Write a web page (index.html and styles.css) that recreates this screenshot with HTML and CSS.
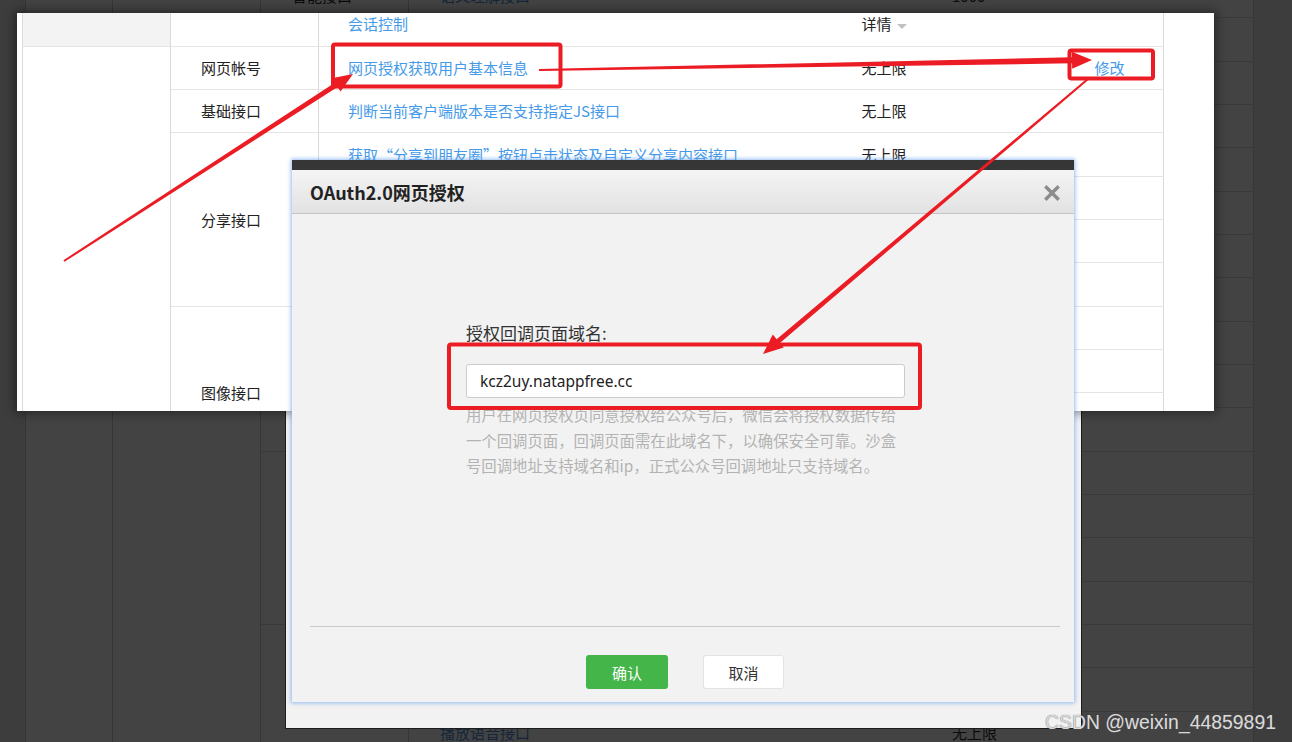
FILE: index.html
```html
<!DOCTYPE html>
<html lang="zh-CN">
<head>
<meta charset="utf-8">
<title>OAuth2.0网页授权</title>
<link rel="stylesheet" href="styles.css">
</head>
<body>
<div class="bg-page">
  <div class="bg-a"></div>
  <div class="bg-b"></div>
  <div class="bg-c c1">智能接口</div>
  <div class="bg-c c2">微信卡券接口</div>
  <div class="bg-c c3">设备信息</div>
  <div class="bg-c c4">音频接口</div>
  <div class="bg-d">语义理解接口</div><div class="bg-e">1000</div>
  <div class="bg-d"></div><div class="bg-e"></div>
  <div class="bg-d"></div><div class="bg-e"></div>
  <div class="bg-d"></div><div class="bg-e"></div>
  <div class="bg-d"></div><div class="bg-e"></div>
  <div class="bg-d"></div><div class="bg-e"></div>
  <div class="bg-d"></div><div class="bg-e"></div>
  <div class="bg-d"></div><div class="bg-e"></div>
  <div class="bg-d"></div><div class="bg-e"></div>
  <div class="bg-d"></div><div class="bg-e"></div>
  <div class="bg-d"></div><div class="bg-e"></div>
  <div class="bg-d"></div><div class="bg-e"></div>
  <div class="bg-d"></div><div class="bg-e"></div>
  <div class="bg-d"></div><div class="bg-e"></div>
  <div class="bg-d"></div><div class="bg-e"></div>
  <div class="bg-d"></div><div class="bg-e"></div>
  <div class="bg-d"></div><div class="bg-e"></div>
  <div class="bg-d">播放语音接口</div><div class="bg-e">无上限</div>
</div>

<div class="frame"></div>

<div class="paste">
  <table class="api">
    <colgroup><col class="w1"><col class="w2"><col class="w3"><col class="w4"><col class="w5"></colgroup>
    <tr>
      <td class="cat grey"></td><td class="sub"></td>
      <td><a>会话控制</a></td><td>详情 <span class="caret"></span></td><td class="act"></td>
    </tr>
    <tr>
      <td class="cat" rowspan="11"></td><td class="sub">网页帐号</td>
      <td><a>网页授权获取用户基本信息</a></td><td>无上限</td><td class="act"><a>修改</a></td>
    </tr>
    <tr>
      <td class="sub">基础接口</td>
      <td><a>判断当前客户端版本是否支持指定JS接口</a></td><td>无上限</td><td class="act"></td>
    </tr>
    <tr>
      <td class="sub" rowspan="4">分享接口</td>
      <td><a>获取“分享到朋友圈”按钮点击状态及自定义分享内容接口</a></td><td>无上限</td><td class="act"></td>
    </tr>
    <tr><td><a>获取“分享给朋友”按钮点击状态及自定义分享内容接口</a></td><td>无上限</td><td class="act"></td></tr>
    <tr><td><a>获取“分享到QQ”按钮点击状态及自定义分享内容接口</a></td><td>无上限</td><td class="act"></td></tr>
    <tr><td><a>获取“分享到腾讯微博”按钮点击状态及自定义分享内容接口</a></td><td>无上限</td><td class="act"></td></tr>
    <tr>
      <td class="sub" rowspan="4">图像接口</td>
      <td><a>拍照或从手机相册中选图接口</a></td><td>无上限</td><td class="act"></td>
    </tr>
    <tr><td><a>预览图片接口</a></td><td>无上限</td><td class="act"></td></tr>
    <tr><td><a>上传图片接口</a></td><td>无上限</td><td class="act"></td></tr>
    <tr><td><a>下载图片接口</a></td><td>无上限</td><td class="act"></td></tr>
  </table>
</div>

<div class="dialog">
  <div class="dialog-top"></div>
  <div class="dialog-head">
    <span class="dialog-title">OAuth2.0网页授权</span>
    <span class="dialog-close">
      <svg width="16" height="16" viewBox="0 0 16 16"><path d="M2.5 2.5 L13.5 13.5 M13.5 2.5 L2.5 13.5" stroke="#8c8c8c" stroke-width="3.4" stroke-linecap="square"/></svg>
    </span>
  </div>
  <div class="dialog-body">
    <div class="field-label">授权回调页面域名:</div>
    <div class="field-input">kcz2uy.natappfree.cc</div>
    <div class="field-help">用户在网页授权页同意授权给公众号后，微信会将授权数据传给一个回调页面，回调页面需在此域名下，以确保安全可靠。沙盒号回调地址支持域名和ip，正式公众号回调地址只支持域名。</div>
  </div>
  <div class="dialog-foot">
    <span class="btn btn-primary">确认</span>
    <span class="btn btn-default">取消</span>
  </div>
</div>

<svg class="marks" width="1292" height="742" viewBox="0 0 1292 742">
  <g fill="none" stroke="#ec1c24" stroke-width="4">
    <rect x="333" y="44.5" width="227.5" height="42" rx="2"/>
    <rect x="1069.5" y="50.5" width="83.5" height="28" rx="2"/>
    <rect x="449" y="344.5" width="471" height="63.5" rx="2"/>
  </g>
  <g fill="#ec1c24">
    <polygon points="64.54,261.84 337.57,86.97 340.56,91.59 353,74 331.86,78.15 334.85,82.77 63.46,260.16"/>
    <polygon points="539.02,71 1072.05,63.36 1072.15,68.86 1092,60 1071.85,51.86 1071.95,57.36 538.98,69"/>
    <polygon points="1088.65,79.76 779.88,342.99 783.76,347.57 763,354 772.78,334.59 776.66,339.17 1087.35,78.24"/>
  </g>
</svg>

<div class="watermark">CSDN @weixin_44859891</div>
</body>
</html>
```

FILE: styles.css
```css
* { box-sizing: border-box; }

html, body { margin: 0; padding: 0; }

body {
  position: relative;
  width: 1292px;
  height: 742px;
  overflow: hidden;
  background: #3d3d3d;
  font-family: "Noto Sans CJK SC", "Noto Sans", sans-serif;
}

/* dimmed page behind the dialog */
.bg-page {
  margin: -25px 0 0 25px;
  width: 1229px;
  display: grid;
  grid-template-columns: 88px 148px 148px 516px 329px;
  grid-auto-rows: 43.33px;
  background: #434343;
  font-size: 15px;
  line-height: 20px;
  color: #0b0b0b;
}

.bg-a {
  grid-column: 1;
  grid-row: 1 / span 18;
  border-left: 1px solid #363636;
  border-right: 1px solid #363636;
}

.bg-b {
  grid-column: 2;
  grid-row: 1 / span 18;
  border-right: 1px solid #363636;
}

.bg-c {
  grid-column: 3;
  display: flex;
  align-items: center;
  padding-left: 31px;
  border-right: 1px solid #363636;
  border-bottom: 1px solid #393939;
}
.c1 { grid-row: 1; }
.c2 { grid-row: 2 / span 10; }
.c3 { grid-row: 12 / span 4; }
.c4 { grid-row: 16 / span 3; }

.bg-d {
  grid-column: 4;
  display: flex;
  align-items: center;
  padding-left: 31px;
  color: #13263a;
  border-bottom: 1px solid #393939;
}

.bg-e {
  grid-column: 5;
  display: flex;
  align-items: center;
  padding-left: 27px;
  border-bottom: 1px solid #393939;
  border-right: 1px solid #363636;
}

/* original dialog frame */
.frame {
  position: absolute;
  left: 285px;
  top: 150px;
  width: 797px;
  height: 579px;
  background: #f2f2f2;
  border: 1px solid #1c1c1c;
}

/* pasted table screenshot */
.paste {
  position: absolute;
  left: 17px;
  top: 13px;
  width: 1197px;
  height: 398px;
  background: #fff;
  overflow: hidden;
  box-shadow: 0 0 10px 2px rgba(0, 0, 0, 0.45);
}

.api {
  margin: -10px 0 0 5px;
  border-collapse: collapse;
  table-layout: fixed;
  width: 1141px;
  font-size: 15px;
  line-height: 20px;
  color: #222;
}

.w1 { width: 148px; }
.w2 { width: 148px; }
.w3 { width: 514px; }
.w4 { width: 233px; }
.w5 { width: 98px; }

.api td {
  height: 43.33px;
  padding: 0 0 0 29px;
  border-bottom: 1px solid #e4e4e4;
  vertical-align: middle;
  white-space: nowrap;
  overflow: hidden;
}

.api td.cat {
  padding: 0;
  border-left: 1px solid #dadada;
  border-right: 1px solid #dadada;
}

.api td.sub {
  padding-left: 30px;
  border-right: 1px solid #dadada;
}

.api td.act { border-right: 1px solid #dadada; }

.api td.grey { background: #f3f3f3; }

.api a {
  color: #459ae9;
  text-decoration: none;
}

.caret {
  display: inline-block;
  margin-left: 2px;
  vertical-align: middle;
  border-left: 5px solid transparent;
  border-right: 5px solid transparent;
  border-top: 5px solid #c2c2c2;
}

/* dialog */
.dialog {
  position: absolute;
  left: 292px;
  top: 160px;
  width: 782px;
  height: 542px;
  display: flex;
  flex-direction: column;
  background: #f2f2f2;
  box-shadow: 0 0 4px 1px rgba(110, 165, 240, 0.75);
}

.dialog-top {
  flex: none;
  height: 10px;
  background: #363636;
}

.dialog-head {
  flex: none;
  height: 44px;
  display: flex;
  align-items: center;
  justify-content: space-between;
  padding: 0 14px 0 18px;
  border-bottom: 1px solid #c5c5c5;
  background: linear-gradient(#f4f4f4, #e2e2e2);
}

.dialog-title {
  font-size: 18px;
  font-weight: 700;
  color: #222;
}

.dialog-close {
  display: flex;
  margin-top: 2px;
}

.dialog-body {
  flex: 1;
  padding: 107px 0 0 174px;
}

.field-label {
  font-size: 17px;
  line-height: 24px;
  color: #333;
}

.field-input {
  margin-top: 19px;
  width: 439px;
  height: 34px;
  display: flex;
  align-items: center;
  padding-left: 13px;
  background: #fff;
  border: 1px solid #cccccc;
  border-radius: 3px;
  font-family: "Noto Sans", sans-serif;
  font-size: 15.5px;
  color: #222;
}

.field-help {
  margin-top: 4px;
  width: 440px;
  font-size: 15.36px;
  line-height: 25.5px;
  color: #b3b3b3;
}

.dialog-foot {
  flex: none;
  margin: 0 14px 0 18px;
  padding: 28px 0 13px;
  display: flex;
  justify-content: center;
  gap: 35px;
  border-top: 1px solid #c9c9c9;
}

.btn {
  width: 82px;
  height: 34px;
  display: flex;
  align-items: center;
  justify-content: center;
  border-radius: 3px;
  font-size: 15px;
}

.btn-primary {
  background: #44b549;
  color: #fff;
}

.btn-default {
  width: 81px;
  background: #fff;
  border: 1px solid #e3e3e3;
  color: #333;
}

/* annotations */
.marks {
  position: absolute;
  left: 0;
  top: 0;
  pointer-events: none;
}

.watermark {
  position: absolute;
  left: 1045px;
  top: 710px;
  font-family: "Liberation Sans", sans-serif;
  font-size: 19.4px;
  line-height: 24px;
  color: #dadada;
  text-shadow: 0 0 1px #555;
  white-space: nowrap;
}
```
